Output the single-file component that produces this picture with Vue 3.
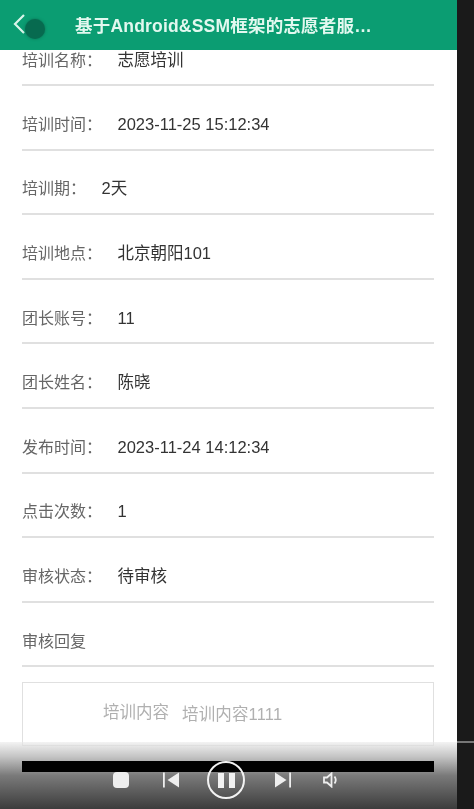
<template>
  <div class="page">
    <div class="phone">
      <header class="top-bar">
        <svg class="back" viewBox="0 0 14 22" width="14" height="22">
          <path d="M12 2 L3 11 L12 20" fill="none" stroke="#d9f5ea" stroke-width="2.2" />
        </svg>
        <span class="floating-dot"></span>
        <h1 class="title">基于Android&amp;SSM框架的志愿者服务系统</h1>
      </header>

      <main class="detail">
        <div class="row first">
          <span class="label">培训名称：</span>
          <span class="value">志愿培训</span>
        </div>
        <div v-for="item in rows" :key="item.label" class="row">
          <span class="label">{{ item.label }}</span>
          <span class="value">{{ item.value }}</span>
        </div>
        <div class="content-box">
          <span class="content-label">培训内容</span>
          <span class="content-value">培训内容1111</span>
        </div>
      </main>

      <div class="player">
        <div class="progress"></div>
        <div class="controls">
          <span class="stop"></span>
          <svg class="prev" viewBox="0 0 16 16" width="16" height="16">
            <rect x="0" y="0.5" width="1.8" height="15" fill="#eee" />
            <path d="M16 0.5 V15.5 L4.5 8 Z" fill="#eee" />
          </svg>
          <span class="pause">
            <i></i>
            <i></i>
          </span>
          <svg class="next" viewBox="0 0 16 16" width="16" height="16">
            <path d="M0 0.5 V15.5 L11.5 8 Z" fill="#eee" />
            <rect x="14.2" y="0.5" width="1.8" height="15" fill="#eee" />
          </svg>
          <svg class="volume" viewBox="0 0 15 16" width="15" height="16">
            <path d="M1 5.5 H4 L8.5 1.5 V14.5 L4 10.5 H1 Z" fill="none" stroke="#eee" stroke-width="1.8" />
            <path d="M11.5 4.5 Q14 8 11.5 11.5" fill="none" stroke="#eee" stroke-width="1.8" />
          </svg>
        </div>
      </div>
    </div>
    <div class="side-strip">
      <span class="strip-line"></span>
    </div>
  </div>
</template>

<script setup>
const rows = [
  { label: '培训时间：', value: '2023-11-25 15:12:34' },
  { label: '培训期：', value: '2天' },
  { label: '培训地点：', value: '北京朝阳101' },
  { label: '团长账号：', value: '11' },
  { label: '团长姓名：', value: '陈晓' },
  { label: '发布时间：', value: '2023-11-24 14:12:34' },
  { label: '点击次数：', value: '1' },
  { label: '审核状态：', value: '待审核' },
  { label: '审核回复', value: '' }
]
</script>

<style>
html,
body {
  margin: 0;
  background: #1a1a1a;
}
</style>

<style scoped>
.page {
  display: flex;
  width: 474px;
  height: 809px;
  overflow: hidden;
  font-family: "Liberation Sans", "Noto Sans CJK SC", sans-serif;
  filter: blur(0.45px);
}

.phone {
  position: relative;
  display: flex;
  flex-direction: column;
  width: 457px;
  background: #fff;
  overflow: hidden;
}

.top-bar {
  position: relative;
  display: flex;
  align-items: center;
  flex-shrink: 0;
  height: 50px;
  padding-left: 12px;
  box-sizing: border-box;
  background: #0b9d72;
}

.back {
  flex-shrink: 0;
  margin-top: -2px;
}

.floating-dot {
  position: absolute;
  left: 25px;
  top: 19px;
  width: 20px;
  height: 20px;
  border-radius: 50%;
  background: #076a4f;
  box-shadow: 0 0 3px rgba(7, 80, 60, 0.6);
}

.title {
  width: 300px;
  margin: -2px 0 0 49px;
  overflow: hidden;
  color: #e2f8ef;
  font-size: 17.5px;
  font-weight: 700;
  letter-spacing: 0.2px;
  white-space: nowrap;
  text-overflow: ellipsis;
}

.detail {
  display: flex;
  flex-direction: column;
  padding: 0 23px 0 22px;
}

.row {
  display: flex;
  align-items: center;
  flex-shrink: 0;
  height: 64.6px;
  padding-top: 13px;
  box-sizing: border-box;
  border-bottom: 2px solid #e0e0e0;
  line-height: 22px;
}

.row.first {
  height: 36px;
  padding-top: 0;
  padding-bottom: 15px;
}

.label {
  margin-top: 2px;
  margin-right: 15.5px;
  color: #666;
  font-size: 16px;
}

.value {
  color: #333;
  font-size: 16.5px;
}

.content-box {
  display: flex;
  flex-shrink: 0;
  align-items: center;
  height: 64px;
  margin-top: 15px;
  padding-left: 80px;
  box-sizing: border-box;
  border: 1.5px solid #e0e0e0;
  color: #b0b0b0;
  line-height: 22px;
}

.content-label {
  margin-top: -5px;
  font-size: 16.5px;
}

.content-value {
  margin-left: 13px;
  margin-top: 0;
  font-size: 16.5px;
  letter-spacing: 0.15px;
}

.player {
  position: absolute;
  left: 0;
  right: 0;
  bottom: 0;
  height: 67px;
  padding-top: 19px;
  box-sizing: border-box;
  background: linear-gradient(to bottom, rgba(235, 235, 235, 0.6) 0%, #c4c4c4 22%, #7a7a7a 50%, #3c3c3c 100%);
}

.progress {
  height: 11px;
  margin: 0 23px 0 22px;
  background: #000;
}

.controls {
  display: flex;
  align-items: center;
  margin-top: -11px;
  padding-left: 113px;
}

.stop {
  width: 16px;
  height: 16px;
  border-radius: 4px;
  background: #eee;
}

.prev {
  margin-left: 34px;
}

.pause {
  display: flex;
  align-items: center;
  justify-content: center;
  gap: 5px;
  width: 38px;
  height: 38px;
  margin-left: 28px;
  border: 2px solid #f2f2f2;
  border-radius: 50%;
  box-sizing: border-box;
}

.pause i {
  width: 6px;
  height: 15px;
  background: #f2f2f2;
}

.next {
  margin-left: 30px;
}

.volume {
  margin-left: 32px;
}

.side-strip {
  flex: 1;
  padding-top: 741px;
  background: #1a1a1a;
}

.strip-line {
  display: block;
  height: 2px;
  background: #777;
}
</style>
